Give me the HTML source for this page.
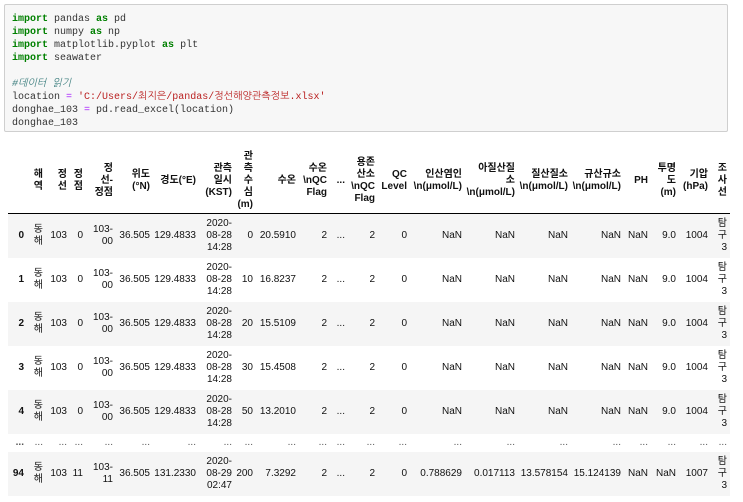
<!DOCTYPE html>
<html><head><meta charset="utf-8"><style>
body{margin:0;background:#fff;width:743px;height:502px;overflow:hidden;position:relative;font-family:"Liberation Sans","Noto Sans CJK KR",sans-serif;}
.code{position:absolute;left:4px;top:4px;width:722px;height:126px;background:#f7f7f7;border:1px solid #cfcfcf;border-radius:2px;font-family:"Liberation Mono","NanumGothic",monospace;font-size:10px;line-height:13px;color:#333;}
.code pre{margin:0;padding:8px 0 0 7px;font-family:inherit;}
.k{color:#008000;font-weight:bold}.c{color:#408080;font-style:italic}.s{color:#ba2121}.o{color:#aa22ff}
table{position:absolute;left:8px;top:148px;border-collapse:collapse;table-layout:fixed;font-size:10px;color:#111;}
th,td{text-align:right;padding:0 3px 0 0;vertical-align:middle;overflow:hidden;line-height:12px;white-space:nowrap;}
th{font-weight:bold;height:65px;border-bottom:1px solid #000;}
td{height:44px;}
tr.g td{background:#f5f5f5;}
tr.d td{height:18px;color:#555}
td.i{font-weight:bold}
</style></head><body>
<div class="code"><pre><span class="k">import</span> pandas <span class="k">as</span> pd
<span class="k">import</span> numpy <span class="k">as</span> np
<span class="k">import</span> matplotlib.pyplot <span class="k">as</span> plt
<span class="k">import</span> seawater

<span class="c">#데이터 읽기</span>
location <span class="o">=</span> <span class="s">'C:/Users/최지은/pandas/정선해양관측정보.xlsx'</span>
donghae_103 <span class="o">=</span> pd.read_excel(location)
donghae_103</pre></div>
<table>
<colgroup><col style="width:19px"><col style="width:19px"><col style="width:24px"><col style="width:16px"><col style="width:30px"><col style="width:37px"><col style="width:46px"><col style="width:36px"><col style="width:21px"><col style="width:43px"><col style="width:31px"><col style="width:18px"><col style="width:30px"><col style="width:32px"><col style="width:55px"><col style="width:53px"><col style="width:53px"><col style="width:53px"><col style="width:27px"><col style="width:28px"><col style="width:32px"><col style="width:19px"></colgroup>
<tr><th></th><th>해<br>역</th><th>정<br>선</th><th>정<br>점</th><th>정<br>선-<br>정점</th><th>위도<br>(°N)</th><th>경도(°E)</th><th>관측<br>일시<br>(KST)</th><th>관<br>측<br>수<br>심<br>(m)</th><th>수온</th><th>수온<br>\nQC<br>Flag</th><th>...</th><th>용존<br>산소<br>\nQC<br>Flag</th><th>QC<br>Level</th><th>인산염인<br>\n(μmol/L)</th><th>아질산질<br>소<br>\n(μmol/L)</th><th>질산질소<br>\n(μmol/L)</th><th>규산규소<br>\n(μmol/L)</th><th>PH</th><th>투명<br>도<br>(m)</th><th>기압<br>(hPa)</th><th>조<br>사<br>선</th></tr>
<tr class="g"><td class="i">0</td><td>동<br>해</td><td>103</td><td>0</td><td>103-<br>00</td><td>36.505</td><td>129.4833</td><td>2020-<br>08-28<br>14:28</td><td>0</td><td>20.5910</td><td>2</td><td>...</td><td>2</td><td>0</td><td>NaN</td><td>NaN</td><td>NaN</td><td>NaN</td><td>NaN</td><td>9.0</td><td>1004</td><td>탐<br>구<br>3</td></tr>
<tr><td class="i">1</td><td>동<br>해</td><td>103</td><td>0</td><td>103-<br>00</td><td>36.505</td><td>129.4833</td><td>2020-<br>08-28<br>14:28</td><td>10</td><td>16.8237</td><td>2</td><td>...</td><td>2</td><td>0</td><td>NaN</td><td>NaN</td><td>NaN</td><td>NaN</td><td>NaN</td><td>9.0</td><td>1004</td><td>탐<br>구<br>3</td></tr>
<tr class="g"><td class="i">2</td><td>동<br>해</td><td>103</td><td>0</td><td>103-<br>00</td><td>36.505</td><td>129.4833</td><td>2020-<br>08-28<br>14:28</td><td>20</td><td>15.5109</td><td>2</td><td>...</td><td>2</td><td>0</td><td>NaN</td><td>NaN</td><td>NaN</td><td>NaN</td><td>NaN</td><td>9.0</td><td>1004</td><td>탐<br>구<br>3</td></tr>
<tr><td class="i">3</td><td>동<br>해</td><td>103</td><td>0</td><td>103-<br>00</td><td>36.505</td><td>129.4833</td><td>2020-<br>08-28<br>14:28</td><td>30</td><td>15.4508</td><td>2</td><td>...</td><td>2</td><td>0</td><td>NaN</td><td>NaN</td><td>NaN</td><td>NaN</td><td>NaN</td><td>9.0</td><td>1004</td><td>탐<br>구<br>3</td></tr>
<tr class="g"><td class="i">4</td><td>동<br>해</td><td>103</td><td>0</td><td>103-<br>00</td><td>36.505</td><td>129.4833</td><td>2020-<br>08-28<br>14:28</td><td>50</td><td>13.2010</td><td>2</td><td>...</td><td>2</td><td>0</td><td>NaN</td><td>NaN</td><td>NaN</td><td>NaN</td><td>NaN</td><td>9.0</td><td>1004</td><td>탐<br>구<br>3</td></tr>
<tr class="d"><td class="i">...</td><td>...</td><td>...</td><td>...</td><td>...</td><td>...</td><td>...</td><td>...</td><td>...</td><td>...</td><td>...</td><td>...</td><td>...</td><td>...</td><td>...</td><td>...</td><td>...</td><td>...</td><td>...</td><td>...</td><td>...</td><td>...</td></tr>
<tr class="g"><td class="i">94</td><td>동<br>해</td><td>103</td><td>11</td><td>103-<br>11</td><td>36.505</td><td>131.2330</td><td>2020-<br>08-29<br>02:47</td><td>200</td><td>7.3292</td><td>2</td><td>...</td><td>2</td><td>0</td><td>0.788629</td><td>0.017113</td><td>13.578154</td><td>15.124139</td><td>NaN</td><td>NaN</td><td>1007</td><td>탐<br>구<br>3</td></tr>
</table>
</body></html>
